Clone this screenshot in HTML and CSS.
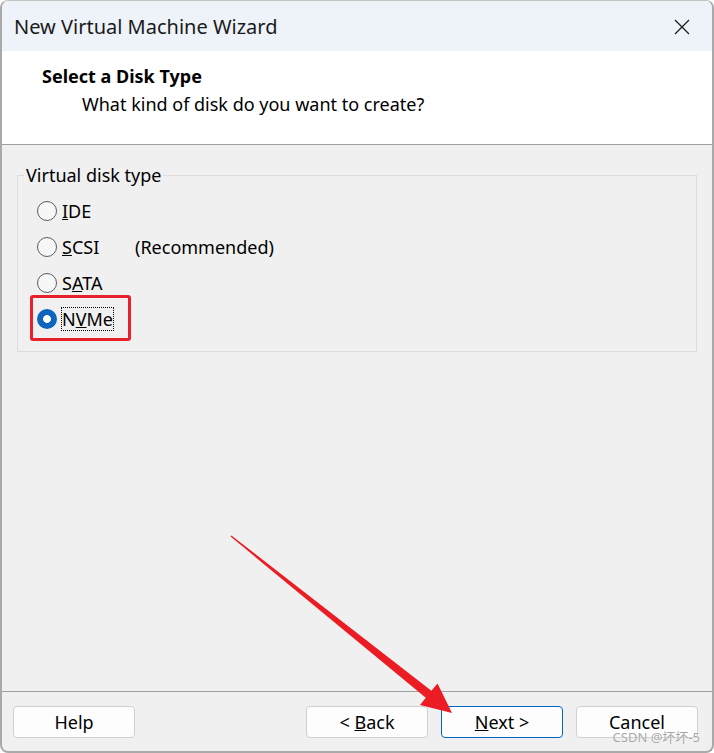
FILE: index.html
```html
<!DOCTYPE html>
<html lang="en">
<head>
<meta charset="utf-8">
<title>New Virtual Machine Wizard</title>
<link rel="stylesheet" href="styles.css">
</head>
<body>
<div class="window">
  <div class="titlebar">
    <span class="title">New Virtual Machine Wizard</span>
    <svg class="close" width="16" height="16" viewBox="0 0 16 16" aria-label="Close">
      <path d="M1 1 L15 15 M15 1 L1 15" stroke="#1c1c1c" stroke-width="1.3" fill="none"/>
    </svg>
  </div>
  <div class="header">
    <div class="h-title">Select a Disk Type</div>
    <div class="h-sub">What kind of disk do you want to create?</div>
  </div>
  <div class="content">
    <fieldset class="group">
      <legend>Virtual disk type</legend>
      <div class="option"><span class="radio"></span><span class="label"><u>I</u>DE</span></div>
      <div class="option"><span class="radio"></span><span class="label wide"><u>S</u>CSI</span><span class="note">(Recommended)</span></div>
      <div class="option"><span class="radio"></span><span class="label">S<u>A</u>TA</span></div>
      <div class="option selected"><span class="radio"></span><span class="label focus">N<u>V</u>Me</span><span class="annot"></span></div>
    </fieldset>
  </div>
  <div class="footer">
    <button class="btn">Help</button>
    <div class="spacer"></div>
    <button class="btn">&lt; <u>B</u>ack</button>
    <button class="btn default"><u>N</u>ext &gt;</button>
    <button class="btn">Cancel</button>
  </div>
  <div class="watermark">CSDN @坏坏-5</div>
  <svg class="arrow" width="714" height="753" viewBox="0 0 714 753">
    <polygon fill="#ec1c24" points="452,713 437.5,683.5 431.4,690.8 231.4,535.4 230.6,536.6 425.8,697.8 420,705"/>
  </svg>
</div>
</body>
</html>
```

FILE: styles.css
```css
* { box-sizing: border-box; }
html, body { margin: 0; padding: 0; background: #ffffff; }
body {
  font-family: "Noto Sans", "Liberation Sans", sans-serif;
  color: #000;
}
.window {
  position: relative;
  width: 714px;
  height: 753px;
  border: 2px solid #a9a9a9;
  border-top: 1px solid #c2c2c2;
  border-radius: 8px;
  overflow: hidden;
  display: flex;
  flex-direction: column;
  background: #f0f0f0;
}
.titlebar {
  height: 50px;
  flex: none;
  background: #eef2f9;
  display: flex;
  align-items: center;
  justify-content: space-between;
  padding: 0 22px 0 12px;
}
.title {
  font-size: 20px;
  line-height: 26px;
  color: #1a1a1a;
  margin-top: 2px;
}
.close { display: block; margin-top: 2px; }
.header {
  height: 94px;
  flex: none;
  background: #ffffff;
  border-bottom: 1px solid #a0a0a0;
  padding: 13px 0 0 40px;
}
.h-title {
  font-weight: bold;
  font-size: 18px;
  line-height: 24px;
}
.h-sub {
  font-size: 18px;
  line-height: 24px;
  margin: 4px 0 0 40px;
}
.content {
  flex: 1;
  padding: 19px 15px 0 15px;
}
.group {
  margin: 0;
  padding: 7px 19px 14px 19px;
  border: 1px solid #dcdcdc;
}
.group legend {
  font-size: 18px;
  line-height: 22px;
  padding: 0 2px;
  margin-left: -13px;
}
.option {
  position: relative;
  display: flex;
  align-items: center;
  height: 36px;
  font-size: 18px;
  line-height: 22px;
}
.radio {
  width: 20px;
  height: 20px;
  border-radius: 50%;
  border: 1px solid #5c5c5c;
  background: #f7f7f7;
  margin-right: 5px;
  flex: none;
}
.selected .radio {
  border: none;
  background: radial-gradient(circle, #ffffff 0 3.6px, #0f65be 4.2px);
}
.label { display: inline-block; }
.label.wide { width: 73px; }
.label.focus {
  border: 1px dotted #000;
  margin-left: -1px;
  padding: 0;
  line-height: 22px;
}
.annot {
  position: absolute;
  left: -7px;
  top: -6px;
  width: 101px;
  height: 46px;
  border: 3px solid #e8202a;
  border-radius: 3px;
}
.footer {
  height: 60px;
  flex: none;
  border-top: 1px solid #a0a0a0;
  display: flex;
  align-items: flex-start;
  padding: 14px 14px 0 11px;
}
.spacer { flex: 1; }
.btn {
  width: 122px;
  height: 32px;
  border: 1px solid #d0d0d0;
  border-radius: 4px;
  background: #fdfdfd;
  font-family: "Noto Sans", "Liberation Sans", sans-serif;
  font-size: 18px;
  color: #000;
  padding: 0;
  margin-left: 13px;
}
.btn:first-child { margin-left: 0; }
.btn.default { border-color: #0067c0; }
.watermark {
  position: absolute;
  right: 12px;
  bottom: 5px;
  font-family: "Noto Sans", "Noto Sans CJK SC", sans-serif;
  font-size: 13px;
  color: rgba(150, 150, 150, 0.85);
  text-shadow: 0 0 1px #ffffff;
}
.arrow {
  position: absolute;
  left: -2px;
  top: -1px;
  pointer-events: none;
}
```
